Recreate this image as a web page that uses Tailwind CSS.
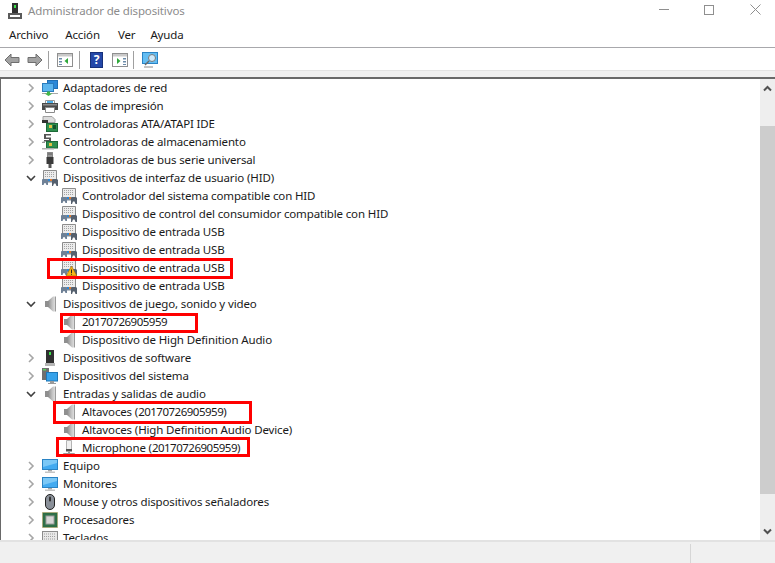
<!DOCTYPE html>
<html lang="es">
<head>
  <meta charset="UTF-8"/>
  <title>Administrador de dispositivos</title>
  <script src="https://cdn.jsdelivr.net/npm/@tailwindcss/browser@4"></script>
</head>
<body class="bg-white overflow-hidden font-['Noto_Sans',sans-serif] text-[11.5px] tracking-[-0.14px] text-[#1a1a1a]">

<!-- icon sprites -->
<svg class="absolute w-0 h-0" width="0" height="0">
  <defs><linearGradient id="sg" x1="0" x2="1" y1="0" y2="0"><stop offset="0" stop-color="#8a8a8a"/><stop offset=".6" stop-color="#c2c2c2"/><stop offset="1" stop-color="#dcdcdc"/></linearGradient></defs>
  <symbol id="chev-r" viewBox="0 0 8 10"><path d="M2 1l4 4-4 4" fill="none" stroke="#a6a6a6" stroke-width="1.6"/></symbol>
  <symbol id="chev-d" viewBox="0 0 10 8"><path d="M1 2l4 4 4-4" fill="none" stroke="#404040" stroke-width="1.6"/></symbol>
  <symbol id="net" viewBox="0 0 16 16"><rect x="5.500" y="0.500" width="10" height="8" fill="#2b88d8" stroke="#1f6fb5"/><rect x="0.500" y="3.500" width="11" height="8" fill="#5cb5ee" stroke="#2a7cbd"/><path d="M0 13.500h16" stroke="#a8a8a8"/><path d="M5 11.500h3v2h2.500L6.500 16l-4-2.500H5z" fill="#43b649"/></symbol>
  <symbol id="printer" viewBox="0 0 16 16"><path d="M3.500 2.500h9v4h-9z" fill="#fff" stroke="#9a9a9a"/><path d="M5 3h6v2H5z" fill="#4fb0e8"/><path d="M0 5h16v7H0z" fill="#4a4a4a"/><path d="M1 6h14v1.500H1z" fill="#8a8a8a"/><path d="M3.500 9.500h9v5h-9z" fill="#fff" stroke="#8a8a8a"/></symbol>
  <symbol id="ata" viewBox="0 0 16 16"><path d="M1 0.500h9l3 3v3H1z" fill="#dcdcdc" stroke="#a0a0a0"/><path d="M0 4h6v3H0z" fill="#333"/><rect x="4.500" y="7.500" width="11" height="8" fill="#2f8f4e" stroke="#1d6a38"/><rect x="7" y="9" width="3" height="3" fill="#e2c044"/><rect x="11" y="9" width="3" height="4" fill="#15522b"/></symbol>
  <symbol id="storage" viewBox="0 0 16 16"><path d="M2 0h7v1.500H4v2h5v4H2V6h5V5H2z" fill="#555"/><path d="M0 8l3-1v2H0z" fill="#999"/><rect x="4.500" y="7.500" width="11" height="6.500" fill="#2f8f4e" stroke="#1d6a38"/><rect x="7" y="9" width="3" height="3" fill="#e2c044"/><path d="M0 14h12v1.500H0z" fill="#b0b0b0"/></symbol>
  <symbol id="usb" viewBox="0 0 16 16"><path d="M5.500 0.300h5v5h-5z" fill="#9a9a9a" stroke="#555" stroke-width=".6"/><path d="M4.500 5h7v7h-7z" fill="#3a3a3a"/><path d="M6.500 12h3v4h-3z" fill="#555"/><path d="M6.500 1.500h1v1h-1zM8.500 1.500h1v1h-1z" fill="#222"/></symbol>
  <symbol id="hid" viewBox="0 0 16 16"><path d="M1.500 0.500h13v9h-13z" fill="#ececec" stroke="#8c8c8c"/><path d="M3 2.500h10M3 4.500h10M3 6.500h10" stroke="#a4a4a4" stroke-dasharray="1 1"/><path d="M0 10c0-.5.500-1 1-1h4l1 1v5H4.500L3.500 13h-1l-1 2H0z" fill="#6f8196"/><path d="M10 10l1-1h4l1 1v6h-1.500l-1-2.500H12L11 16h-1z" fill="#55606e"/><rect x="6" y="9" width="2" height="2" fill="#2b88d8"/><rect x="8" y="9" width="2" height="2" fill="#e07a30"/><path d="M6 11h4v1.500H6z" fill="#7d8a99"/></symbol>
  <symbol id="speaker" viewBox="0 0 16 16"><path d="M3 5h3v6H3z" fill="#8f8f8f"/><path d="M6 5l5-4.500h2v15h-2l-5-4.500z" fill="url(#sg)"/><path d="M13.500 .5v15" stroke="#9a9a9a"/></symbol>
  <symbol id="soft" viewBox="0 0 16 16"><path d="M4 0h8v13H4z" fill="#303030"/><rect x="7" y="2" width="2" height="3" fill="#3ce04a"/><path d="M3 13h10v3H3z" fill="#b5b5b5"/></symbol>
  <symbol id="system" viewBox="0 0 16 16"><path d="M0 0h7v12H0z" fill="#6f6f6f"/><rect x="1" y="1" width="3" height="1.500" fill="#57d05f"/><rect x="4.500" y="4.500" width="11" height="8.500" fill="#36a2ea" stroke="#1e78b8"/><path d="M8 13h4v2h2v1H6v-1h2z" fill="#9a9a9a"/></symbol>
  <symbol id="monitor" viewBox="0 0 16 16"><rect x="0.500" y="1.500" width="15" height="10" fill="#43aaf0" stroke="#2a83c4"/><path d="M1 2h14v3L1 9z" fill="#7cc8f6"/><path d="M6 12h4v1.500H6z" fill="#a8a8a8"/><path d="M3 13.500h10V15H3z" fill="#c4c4c4"/></symbol>
  <symbol id="mouse" viewBox="0 0 16 16"><rect x="3.500" y="0.500" width="9" height="15" rx="4.500" fill="#8a9099" stroke="#222"/><rect x="7" y="2.500" width="2" height="5" rx="1" fill="#333"/></symbol>
  <symbol id="cpu" viewBox="0 0 16 16"><rect x="0.500" y="0.500" width="15" height="15" fill="#2c6b45" stroke="#b9a25a" stroke-dasharray="1 1"/><rect x="1.500" y="1.500" width="13" height="13" fill="#2f7049"/><rect x="4" y="4" width="8" height="8" fill="#d6d6d6" stroke="#9c9c9c"/></symbol>
  <symbol id="keyboard" viewBox="0 0 16 16"><rect x="0.500" y="1.500" width="15" height="12" fill="#e8e8e8" stroke="#8c8c8c"/><path d="M2 4h12M2 6.500h12M2 9h12" stroke="#a0a0a0" stroke-dasharray="1 1"/></symbol>
  <symbol id="mic" viewBox="0 0 16 16"><path d="M5.500 0.500h5v9h-5z" fill="#f0f0f0" stroke="#b4b4b4"/><path d="M5 9h6v2.500H5z" fill="#555"/><path d="M7 11.500h2v2H7z" fill="#9a9a9a"/><path d="M2.500 13.500h11v2h-11z" fill="#fff" stroke="#9a9a9a"/></symbol>
  <symbol id="pane" viewBox="0 0 16 16"><rect x="0.500" y="1.500" width="15" height="13" fill="#fff" stroke="#8f8f8f"/><path d="M1 2h14v2.500H1z" fill="#c9c9c9"/></symbol>
</svg>

<div class="relative h-[563px] w-[775px] flex flex-col">

  <!-- title bar -->
  <div class="h-[21px] flex items-center shrink-0">
    <svg class="ml-[8px] w-[15px] h-[16px]" viewBox="0 0 15 16"><path d="M4 0h6v10H4z" fill="#303030"/><rect x="6" y="2" width="2" height="3" fill="#3ce04a"/><path d="M0 10h14v6H0z" fill="#5a5a5a"/><path d="M2 12h10v2H2z" fill="#fff"/></svg>
    <span class="ml-[5px] text-[#8c8c8c]">Administrador de dispositivos</span>
    <div class="ml-auto flex items-center -mt-[2px]">
      <div class="w-[10px] h-px bg-[#8f8f8f] mr-[35px]"></div>
      <div class="w-[10px] h-[10px] border border-[#8f8f8f] mr-[36px]"></div>
      <svg class="w-[11px] h-[11px] mr-[14px]" viewBox="0 0 11 11"><path d="M.5.500l10 10M10.500.500l-10 10" stroke="#8f8f8f"/></svg>
    </div>
  </div>

  <!-- menu -->
  <div class="h-[27px] pt-[2px] flex items-center pl-px shrink-0 border-b border-[#a8a8ac]">
    <span class="pl-[8px] pr-[9px]">Archivo</span>
    <span class="pl-[8px] pr-[10px]">Acción</span>
    <span class="pl-[8px] pr-[7px]">Ver</span>
    <span class="px-[8px]">Ayuda</span>
  </div>

  <!-- toolbar -->
  <div class="h-[22px] flex items-center pl-[4px] pt-[2px] shrink-0">
    <svg class="w-[16px] h-[14px]" viewBox="0 0 16 14"><path d="M7 1L1 7l6 6V9.500h8v-5H7z" fill="#a2a2a2" stroke="#6e6e6e"/></svg>
    <svg class="w-[16px] h-[14px] ml-[7px]" viewBox="0 0 16 14"><path d="M9 1l6 6-6 6V9.500H1v-5h8z" fill="#a2a2a2" stroke="#6e6e6e"/></svg>
    <div class="w-px h-[18px] bg-[#a0a0a0] ml-[5px]"></div>
    <svg class="w-[16px] h-[16px] ml-[8px]" viewBox="0 0 16 16"><use href="#pane"/><path d="M2 6h3v1.500H2zM2 9h3v1.500H2zM2 12h3v1H2z" fill="#6a8aa8"/><path d="M11 6v6L7.500 9z" fill="#2fa83a"/></svg>
    <div class="w-px h-[18px] bg-[#a0a0a0] ml-[6px]"></div>
    <div class="w-[13px] h-[16px] ml-[10px] bg-[#2347a8] border border-[#16307a] flex items-center justify-center text-white text-[12px] font-bold leading-none">?</div>
    <svg class="w-[16px] h-[16px] ml-[9px]" viewBox="0 0 16 16"><use href="#pane"/><path d="M11 6h3v1.500h-3zM11 9h3v1.500h-3zM11 12h3v1h-3z" fill="#6a8aa8"/><path d="M5 6v6l3.500-3z" fill="#2fa83a"/></svg>
    <div class="w-px h-[18px] bg-[#a0a0a0] ml-[5px]"></div>
    <svg class="w-[16px] h-[16px] ml-[8px]" viewBox="0 0 16 16"><rect x="0.500" y="0.500" width="15" height="11" fill="#63bdf2" stroke="#2a83c4"/><path d="M2 15h9" stroke="#8a8a8a"/><circle cx="10" cy="6" r="3.500" fill="#cfe9f9" stroke="#7a7a7a"/><path d="M7 9l-4 4" stroke="#6a6a6a" stroke-width="1.500"/></svg>
  </div>

  <!-- strip above the tree -->
  <div class="h-[9px] bg-[#f0f0f0] border-t border-[#e3e3e3] border-b-2 border-b-[#696969] shrink-0"></div>

  <!-- tree + scrollbar -->
  <div class="flex-1 min-h-0 flex border-l border-[#696969]">
    <div class="flex-1 min-w-0 overflow-hidden pl-[25px] [&>div]:h-[18px] [&>div]:flex [&>div]:items-center [&>div]:whitespace-pre [&_svg]:shrink-0">
      <div><svg class="w-[8px] h-[10px] ml-[1px] mr-[7px]"><use href="#chev-r"/></svg><svg class="w-[16px] h-[16px] mr-[5px]"><use href="#net"/></svg>Adaptadores de red</div>
      <div><svg class="w-[8px] h-[10px] ml-[1px] mr-[7px]"><use href="#chev-r"/></svg><svg class="w-[16px] h-[16px] mr-[5px]"><use href="#printer"/></svg>Colas de impresión</div>
      <div><svg class="w-[8px] h-[10px] ml-[1px] mr-[7px]"><use href="#chev-r"/></svg><svg class="w-[16px] h-[16px] mr-[5px]"><use href="#ata"/></svg>Controladoras ATA/ATAPI IDE</div>
      <div><svg class="w-[8px] h-[10px] ml-[1px] mr-[7px]"><use href="#chev-r"/></svg><svg class="w-[16px] h-[16px] mr-[5px]"><use href="#storage"/></svg>Controladoras de almacenamiento</div>
      <div><svg class="w-[8px] h-[10px] ml-[1px] mr-[7px]"><use href="#chev-r"/></svg><svg class="w-[16px] h-[16px] mr-[5px]"><use href="#usb"/></svg>Controladoras de bus serie universal</div>
      <div><svg class="w-[10px] h-[8px] mr-[6px]"><use href="#chev-d"/></svg><svg class="w-[16px] h-[16px] mr-[5px]"><use href="#hid"/></svg>Dispositivos de interfaz de usuario (HID)</div>
      <div class="pl-[35px]"><svg class="w-[16px] h-[16px] mr-[5px]"><use href="#hid"/></svg>Controlador del sistema compatible con HID</div>
      <div class="pl-[35px]"><svg class="w-[16px] h-[16px] mr-[5px]"><use href="#hid"/></svg>Dispositivo de control del consumidor compatible con HID</div>
      <div class="pl-[35px]"><svg class="w-[16px] h-[16px] mr-[5px]"><use href="#hid"/></svg>Dispositivo de entrada USB</div>
      <div class="pl-[35px]"><svg class="w-[16px] h-[16px] mr-[5px]"><use href="#hid"/></svg>Dispositivo de entrada USB</div>
      <div class="pl-[35px]"><svg class="w-[16px] h-[16px] mr-[5px]" viewBox="0 0 16 16"><use href="#hid"/><path d="M10.500 6l5.500 10H5z" fill="#f7b416" stroke="#8a6510" stroke-width=".6"/><path d="M10 9.500h1v3.500h-1zM10 13.800h1v1h-1z" fill="#222"/></svg>Dispositivo de entrada USB</div>
      <div class="pl-[35px]"><svg class="w-[16px] h-[16px] mr-[5px]"><use href="#hid"/></svg>Dispositivo de entrada USB</div>
      <div><svg class="w-[10px] h-[8px] mr-[6px]"><use href="#chev-d"/></svg><svg class="w-[16px] h-[16px] mr-[5px]"><use href="#speaker"/></svg>Dispositivos de juego, sonido y video</div>
      <div class="pl-[35px]"><svg class="w-[16px] h-[16px] mr-[5px]"><use href="#speaker"/></svg><span class="tracking-[-0.5px]">20170726905959</span></div>
      <div class="pl-[35px]"><svg class="w-[16px] h-[16px] mr-[5px]"><use href="#speaker"/></svg>Dispositivo de High Definition Audio</div>
      <div><svg class="w-[8px] h-[10px] ml-[1px] mr-[7px]"><use href="#chev-r"/></svg><svg class="w-[16px] h-[16px] mr-[5px]"><use href="#soft"/></svg>Dispositivos de software</div>
      <div><svg class="w-[8px] h-[10px] ml-[1px] mr-[7px]"><use href="#chev-r"/></svg><svg class="w-[16px] h-[16px] mr-[5px]"><use href="#system"/></svg>Dispositivos del sistema</div>
      <div><svg class="w-[10px] h-[8px] mr-[6px]"><use href="#chev-d"/></svg><svg class="w-[16px] h-[16px] mr-[5px]"><use href="#speaker"/></svg>Entradas y salidas de audio</div>
      <div class="pl-[35px]"><svg class="w-[16px] h-[16px] mr-[5px]"><use href="#speaker"/></svg><span>Altavoces (<span class="tracking-[-0.5px]">20170726905959</span>)</span></div>
      <div class="pl-[35px]"><svg class="w-[16px] h-[16px] mr-[5px]"><use href="#speaker"/></svg>Altavoces (High Definition Audio Device)</div>
      <div class="pl-[35px]"><svg class="w-[16px] h-[16px] mr-[5px]"><use href="#mic"/></svg><span>Microphone (<span class="tracking-[-0.5px]">20170726905959</span>)</span></div>
      <div><svg class="w-[8px] h-[10px] ml-[1px] mr-[7px]"><use href="#chev-r"/></svg><svg class="w-[16px] h-[16px] mr-[5px]"><use href="#monitor"/></svg>Equipo</div>
      <div><svg class="w-[8px] h-[10px] ml-[1px] mr-[7px]"><use href="#chev-r"/></svg><svg class="w-[16px] h-[16px] mr-[5px]"><use href="#monitor"/></svg>Monitores</div>
      <div><svg class="w-[8px] h-[10px] ml-[1px] mr-[7px]"><use href="#chev-r"/></svg><svg class="w-[16px] h-[16px] mr-[5px]"><use href="#mouse"/></svg>Mouse y otros dispositivos señaladores</div>
      <div><svg class="w-[8px] h-[10px] ml-[1px] mr-[7px]"><use href="#chev-r"/></svg><svg class="w-[16px] h-[16px] mr-[5px]"><use href="#cpu"/></svg>Procesadores</div>
      <div><svg class="w-[8px] h-[10px] ml-[1px] mr-[7px]"><use href="#chev-r"/></svg><svg class="w-[16px] h-[16px] mr-[5px]"><use href="#keyboard"/></svg>Teclados</div>
    </div>

    <!-- scrollbar -->
    <div class="w-[15px] shrink-0 bg-[#eeeeee] flex flex-col items-center">
      <svg class="w-[9px] h-[7px] mt-[6px]" viewBox="0 0 9 7"><path d="M1 5.500l3.500-3.500L8 5.500" fill="none" stroke="#505050" stroke-width="2"/></svg>
      <div class="w-full h-[368px] bg-[#cdcdcd] mt-[34px]"></div>
      <svg class="w-[9px] h-[7px] mt-[34px]" viewBox="0 0 9 7"><path d="M1 1.500L4.500 5 8 1.500" fill="none" stroke="#505050" stroke-width="2"/></svg>
    </div>
  </div>

  <!-- status bar -->
  <div class="h-[23px] shrink-0 border-t-2 border-[#e2e2e2] bg-[#f0f0f0] flex">
    <div class="ml-[690px] mt-[2px] w-px bg-[#d6d6d6]"></div>
  </div>

  <!-- red marks drawn over the list -->
  <div class="absolute left-[47px] top-[258px] w-[186px] h-[21px] border-[3px] border-[#ff0000]"></div>
  <div class="absolute left-[60px] top-[313px] w-[138px] h-[20px] border-[3px] border-[#ff0000]"></div>
  <div class="absolute left-[53px] top-[401px] w-[199px] h-[23px] border-[3px] border-[#ff0000]"></div>
  <div class="absolute left-[56px] top-[437px] w-[194px] h-[20px] border-[3px] border-[#ff0000]"></div>
</div>
</body>
</html>
